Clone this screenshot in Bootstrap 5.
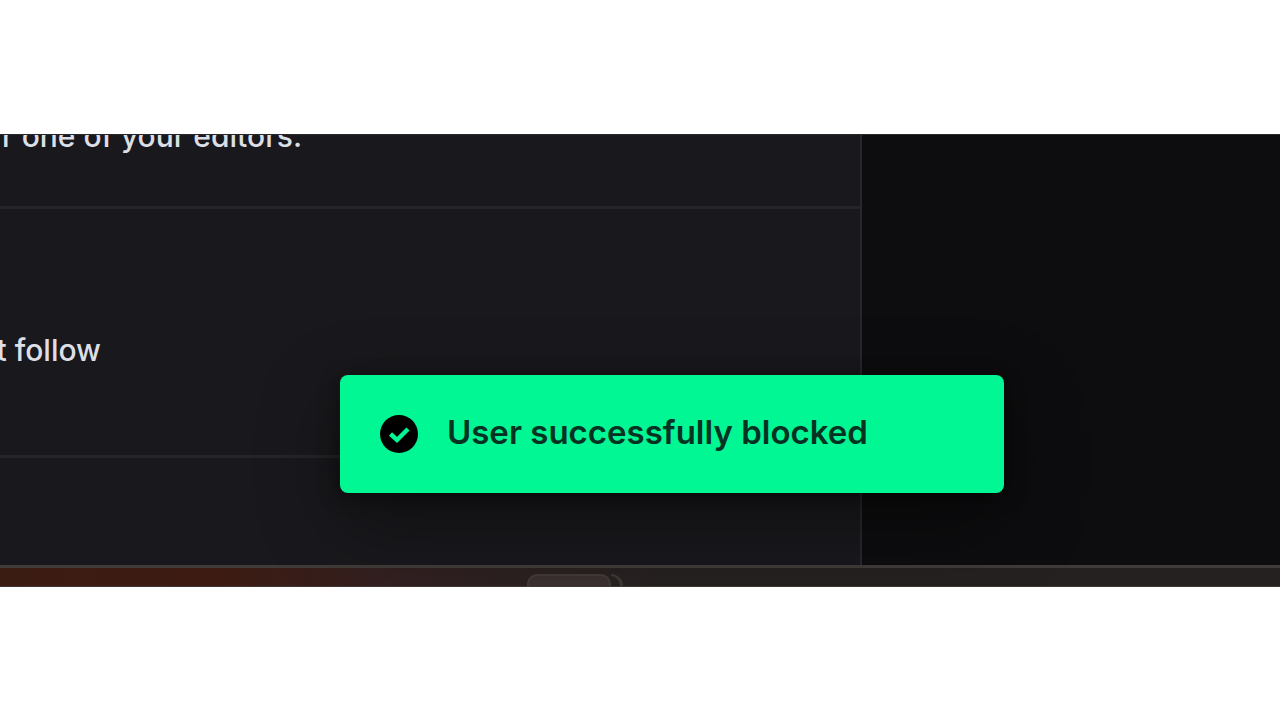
<!DOCTYPE html>
<html lang="en">
<head>
<meta charset="utf-8">
<meta name="viewport" content="width=device-width, initial-scale=1">
<title>User blocked</title>
<link rel="stylesheet" href="https://cdn.jsdelivr.net/npm/bootstrap@5.3.0/dist/css/bootstrap.min.css">
<style>
body{font-family:Inter,"Liberation Sans",sans-serif;background:#fff}
.screen{background:#0d0d0f;border-top:1px solid #29292c}
.feed{width:67.35%;background:#19191d;border-right:2px solid #28282c}
.entry{border-bottom:3px solid #252529;padding-bottom:52px}
.entry.middle{padding:123px 0 87px}
.tail{height:107px}
.snippet{color:#dcdfe6;font-size:30px;font-weight:500;line-height:36px;white-space:nowrap}
.snippet.clipped{width:302px;height:19px}
.snippet.short{width:101px}
.dock{height:22px;border-top:3px solid #403a39;border-bottom:1px solid #403837;background:linear-gradient(90deg,#3b1c13 0,#3d1b12 17%,#322021 31%,#2b2020 40%,#242120 55%,#242120 100%)}
.dock-tab{width:84px;height:24px;border-radius:10px;margin-top:6px;margin-left:41.2%;background:#3a3030;border:2px solid #423938}
.dock-edge{width:12px;height:24px;margin-top:6px;border-top:2px solid #3d3736;border-right:3px solid #3d3736;border-radius:0 12px 0 0}
.notice{left:26.56%;width:51.9%;top:240px;padding:35px 40px 39px;background:#00f794;border-radius:8px;box-shadow:0 28px 80px rgba(0,0,0,.4),0 4px 20px rgba(0,0,0,.45);color:#053323;font-size:33px;line-height:44px;font-weight:600;gap:29px}
.notice svg{margin-top:5px}
</style>
</head>
<body>
<main class="min-vh-100 d-flex flex-column justify-content-center">
  <div class="screen position-relative overflow-hidden">
    <section class="feed">
      <div class="entry"><div class="snippet clipped d-flex justify-content-end align-items-end overflow-hidden"><span>r one of your editors.</span></div></div>
      <div class="entry middle"><div class="snippet short d-flex justify-content-end overflow-hidden"><span>t follow</span></div></div>
      <div class="tail"></div>
    </section>
    <div class="dock d-flex overflow-hidden"><div class="dock-tab flex-shrink-0"></div><div class="dock-edge flex-shrink-0"></div></div>
    <div class="notice position-absolute d-flex align-items-start" role="status">
      <svg width="38" height="38" viewBox="0 0 38 38" class="flex-shrink-0" aria-hidden="true"><circle cx="19" cy="19" r="19" fill="#000"/><path d="M10.500 19 17 25 28 14" fill="none" stroke="#00f794" stroke-width="4.500"/></svg>
      <span class="text-nowrap">User successfully blocked</span>
    </div>
  </div>
</main>
<script src="https://cdn.jsdelivr.net/npm/bootstrap@5.3.0/dist/js/bootstrap.bundle.min.js"></script>
</body>
</html>
